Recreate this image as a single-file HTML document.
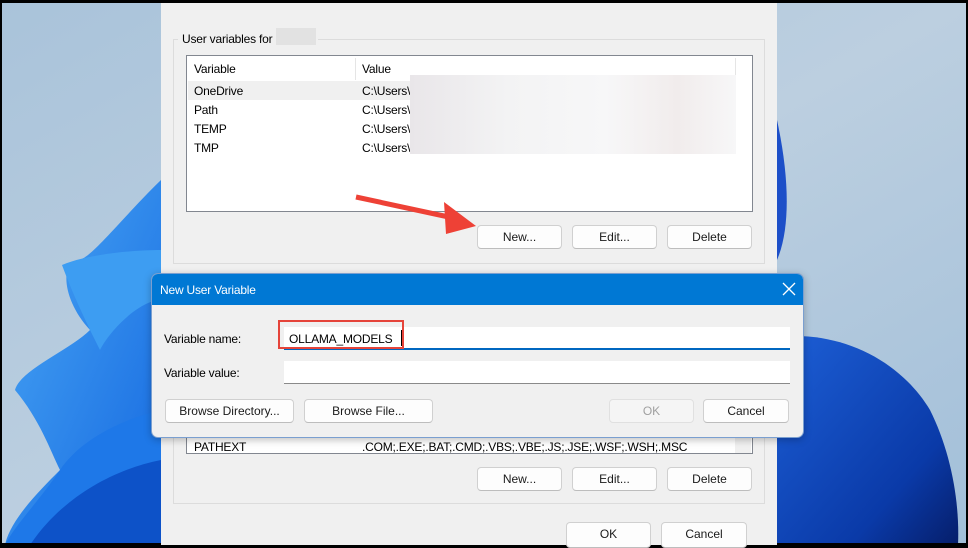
<!DOCTYPE html>
<html><head><meta charset="utf-8"><style>
*{box-sizing:border-box;margin:0;padding:0}
body{width:968px;height:545px;overflow:hidden;background:#000;font-family:"Liberation Sans",sans-serif;font-size:12px;color:#000;position:relative}
.a{position:absolute}
.btn{position:absolute;background:#fdfdfd;border:1px solid #d0d0d0;border-bottom-color:#bdbdbd;border-radius:4px;text-align:center;font-size:12px;line-height:22px;color:#1a1a1a}
.t{position:absolute;font-size:12px;white-space:nowrap;letter-spacing:-0.2px}
</style></head><body>
<svg class="a" style="left:2px;top:3px" width="964" height="540" viewBox="2 3 964 540">
<defs>
<linearGradient id="bg" x1="0" y1="0" x2="1" y2="1"><stop offset="0" stop-color="#a9c3da"/><stop offset=".5" stop-color="#bccfe0"/><stop offset="1" stop-color="#a2bfd9"/></linearGradient>
<linearGradient id="lb" x1="0" y1="0" x2="1" y2="1"><stop offset="0" stop-color="#4aa8f5"/><stop offset="1" stop-color="#1568e0"/></linearGradient>
<linearGradient id="rb" x1="0" y1="0" x2="1" y2="1"><stop offset="0" stop-color="#1d5fd6"/><stop offset=".7" stop-color="#0a3aa8"/><stop offset="1" stop-color="#061e6a"/></linearGradient>
</defs>
<rect x="0" y="0" width="968" height="545" fill="url(#bg)"/>
<path d="M161 180 C120 220 90 260 78 260 C60 262 62 300 90 330 C70 350 20 370 15 390 C40 420 50 450 60 470 C40 490 10 520 5 545 L161 545 Z" fill="url(#lb)"/>
<path d="M161 250 C130 250 85 255 62 265 C75 300 90 330 100 350 C110 330 140 300 161 300Z" fill="#3d9df2"/>
<path d="M161 410 C120 420 80 440 60 470 C40 500 15 525 5 545 L161 545Z" fill="#1e78e8"/>
<path d="M161 460 C110 470 60 500 30 545 L161 545Z" fill="#0d52c8"/>
<path d="M777 337 C840 330 900 360 930 410 C950 450 960 500 958 545 L777 545Z" fill="url(#rb)"/>
<path d="M777 120 C790 180 790 230 777 260Z" fill="#1d4fc8"/>
</svg>
<div class="a" style="left:161px;top:3px;width:616px;height:542px;background:#f0f0f0"></div>
<div class="a" style="left:173px;top:39px;width:592px;height:225px;border:1px solid #dcdcdc"></div>
<div class="a" style="left:178px;top:32px;width:140px;height:14px;background:#f0f0f0"></div>
<div class="t" style="left:182px;top:32px">User variables for</div>
<div class="a" style="left:276px;top:28px;width:40px;height:17px;background:#e2e2e2"></div>
<div class="a" style="left:186px;top:55px;width:567px;height:157px;background:#fff;border:1px solid #828790"></div>
<div class="a" style="left:355px;top:58px;width:1px;height:22px;background:#e5e5e5"></div>
<div class="a" style="left:735px;top:58px;width:1px;height:22px;background:#e5e5e5"></div>
<div class="a" style="left:188px;top:81px;width:548px;height:19px;background:#f0f0f0"></div>
<div class="t" style="left:194px;top:62px">Variable</div>
<div class="t" style="left:362px;top:62px">Value</div>
<div class="t" style="left:194px;top:84px">OneDrive</div>
<div class="t" style="left:194px;top:103px">Path</div>
<div class="t" style="left:194px;top:122px">TEMP</div>
<div class="t" style="left:194px;top:141px">TMP</div>
<div class="t" style="left:362px;top:84px">C:\Users\</div>
<div class="t" style="left:362px;top:103px">C:\Users\</div>
<div class="t" style="left:362px;top:122px">C:\Users\</div>
<div class="t" style="left:362px;top:141px">C:\Users\</div>
<div class="a" style="left:410px;top:75px;width:326px;height:79px;background:linear-gradient(90deg,#e9e6e9,#f3f3f4 30%,#f7f7f8 60%,#f1ecec 82%,#f7f7f8)"></div>
<div class="btn" style="left:477px;top:225px;width:85px;height:24px">New...</div>
<div class="btn" style="left:572px;top:225px;width:85px;height:24px">Edit...</div>
<div class="btn" style="left:667px;top:225px;width:85px;height:24px">Delete</div>
<svg class="a" style="left:350px;top:190px" width="135" height="45"><line x1="6" y1="7" x2="108" y2="29" stroke="#ee4136" stroke-width="5"/><polygon points="94,12 126,36 96,44" fill="#ee4136"/></svg>
<div class="a" style="left:173px;top:420px;width:592px;height:84px;border:1px solid #dcdcdc;border-top:none"></div>
<div class="a" style="left:186px;top:420px;width:567px;height:34px;background:#fff;border:1px solid #828790;border-top:none"></div>
<div class="a" style="left:735px;top:420px;width:16px;height:33px;background:#f0f0f0"></div>
<div class="t" style="left:194px;top:440px">PATHEXT</div>
<div class="t" style="left:362px;top:440px">.COM;.EXE;.BAT;.CMD;.VBS;.VBE;.JS;.JSE;.WSF;.WSH;.MSC</div>
<div class="btn" style="left:477px;top:467px;width:85px;height:24px">New...</div>
<div class="btn" style="left:572px;top:467px;width:85px;height:24px">Edit...</div>
<div class="btn" style="left:667px;top:467px;width:85px;height:24px">Delete</div>
<div class="btn" style="left:566px;top:522px;width:85px;height:26px">OK</div>
<div class="btn" style="left:661px;top:522px;width:86px;height:26px">Cancel</div>
<div class="a" style="left:151px;top:273px;width:653px;height:165px;background:#f0f0f0;border:1px solid #7a9fd0;border-radius:7px;overflow:hidden;box-shadow:0 2px 8px rgba(0,0,0,.25)">
<div class="a" style="left:0;top:0;width:653px;height:31px;background:#0078d4"></div>
<div class="t" style="left:8px;top:9px;color:#fff">New User Variable</div>
<svg class="a" style="left:630px;top:8px" width="14" height="14"><path d="M1 1L13 13M13 1L1 13" stroke="#fff" stroke-width="1.3"/></svg>
<div class="t" style="left:12px;top:58px">Variable name:</div>
<div class="t" style="left:12px;top:92px">Variable value:</div>
<div class="a" style="left:132px;top:53px;width:506px;height:23px;background:#fff;border-bottom:2px solid #0067c0"></div>
<div class="a" style="left:132px;top:87px;width:506px;height:23px;background:#fff;border-bottom:1px solid #8a8a8a"></div>
<div class="a" style="left:126px;top:46px;width:126px;height:29px;border:2px solid #e5443a"></div>
<div class="t" style="left:137px;top:58px">OLLAMA_MODELS</div>
<div class="a" style="left:249px;top:56px;width:1px;height:16px;background:#000"></div>
<div class="btn" style="left:13px;top:125px;width:129px;height:24px">Browse Directory...</div>
<div class="btn" style="left:152px;top:125px;width:129px;height:24px">Browse File...</div>
<div class="btn" style="left:457px;top:125px;width:85px;height:24px;background:#f5f5f5;color:#a0a0a0;border-color:#e0e0e0">OK</div>
<div class="btn" style="left:551px;top:125px;width:86px;height:24px">Cancel</div>
</div>
</body></html>
